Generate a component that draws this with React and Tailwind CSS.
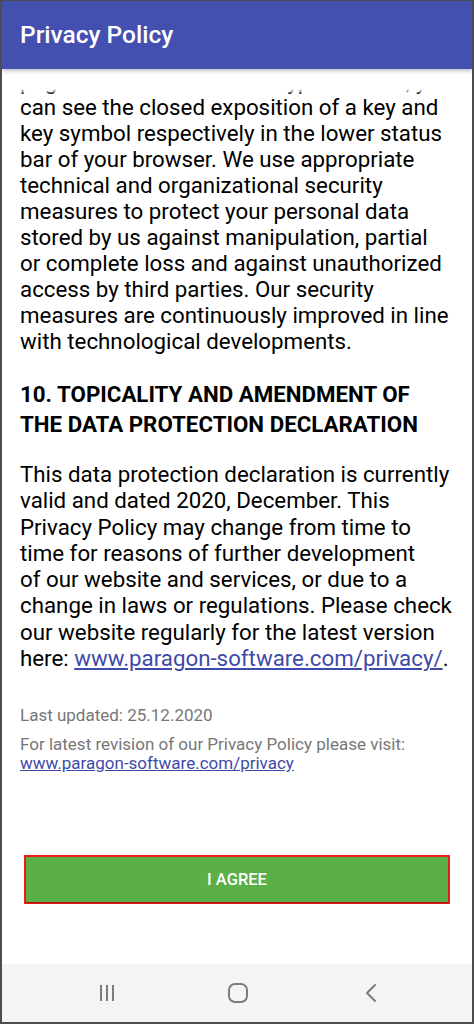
import React from 'react';

const font = { fontFamily: 'Roboto, "Noto Sans", Arial, sans-serif' };

const intro = [
  'page of our website is encrypted or not, you',
  'can see the closed exposition of a key and',
  'key symbol respectively in the lower status',
  'bar of your browser. We use appropriate',
  'technical and organizational security',
  'measures to protect your personal data',
  'stored by us against manipulation, partial',
  'or complete loss and against unauthorized',
  'access by third parties. Our security',
  'measures are continuously improved in line',
  'with technological developments.',
];

const body = [
  'This data protection declaration is currently',
  'valid and dated 2020, December. This',
  'Privacy Policy may change from time to',
  'time for reasons of further development',
  'of our website and services, or due to a',
  'change in laws or regulations. Please check',
  'our website regularly for the latest version',
];

function NavBar() {
  return (
    <div className="h-[58px] shrink-0 bg-[#f4f4f4] flex items-center pl-[95px]">
      {/* recents */}
      <svg width="20" height="20" viewBox="0 0 20 20">
        <path d="M4 2v16M10 2v16M16 2v16" stroke="#7c7c7c" strokeWidth="2" fill="none" />
      </svg>
      {/* home */}
      <svg width="22" height="22" viewBox="0 0 22 22" className="ml-[110px]">
        <rect x="2" y="2" width="18" height="18" rx="6" stroke="#7c7c7c" strokeWidth="2" fill="none" />
      </svg>
      {/* back */}
      <svg width="16" height="20" viewBox="0 0 16 20" className="ml-[114px]">
        <path d="M12 2L4 10l8 8" stroke="#7c7c7c" strokeWidth="2" fill="none" strokeLinecap="round" strokeLinejoin="round" />
      </svg>
    </div>
  );
}

export default function App() {
  return (
    <div
      className="w-[474px] h-[1024px] flex flex-col bg-white border-x-2 border-b-2 border-t border-[#4d4d4d] overflow-hidden"
      style={font}
    >
      {/* App bar */}
      <div className="h-[68px] shrink-0 bg-[#4450b0] flex items-center px-[18px] shadow-[0_2px_4px_rgba(0,0,0,0.25)] relative z-10">
        <span className="text-white text-[24.5px] font-medium">Privacy Policy</span>
      </div>

      {/* Scrolling content */}
      <div className="flex-1 relative overflow-hidden">
        <div className="absolute top-0 left-0 right-0 h-[25px] bg-[linear-gradient(to_bottom,white_78%,rgba(255,255,255,0.6)_90%,rgba(255,255,255,0))] z-[1]" />
        <div className="-mt-[1px] px-[18px] text-black text-[22.3px] leading-[26px] whitespace-nowrap">
          {intro.map((l, i) => (
            <div key={i}>{l}</div>
          ))}
          <div className="mt-[25px] font-bold leading-[30px]">
            <div>10. TOPICALITY AND AMENDMENT OF</div>
            <div>THE DATA PROTECTION DECLARATION</div>
          </div>
          <div className="mt-[22px] leading-[26.3px]">
            {body.map((l, i) => (
              <div key={i}>{l}</div>
            ))}
            <div>
              here: <span className="text-[#3f4aa8] underline">www.paragon-software.com/privacy/</span>.
            </div>
          </div>
          <div className="mt-[34px] text-[#777777] text-[17px] leading-[20px]">Last updated: 25.12.2020</div>
          <div className="mt-[10px] text-[#777777] text-[17px] leading-[19px]">
            <div>For latest revision of our Privacy Policy please visit:</div>
            <div className="text-[#3f4aa8] underline">www.paragon-software.com/privacy</div>
          </div>
        </div>

        <div className="mt-[82px] mx-[22px] border-2 border-[#ee1c1c]">
          <button className="w-full h-[45px] bg-[#5aaf47] text-white text-[16.5px] font-medium shadow-[0_1px_1px_rgba(0,0,0,0.3)]">
            I AGREE
          </button>
        </div>
      </div>

      <NavBar />
    </div>
  );
}
